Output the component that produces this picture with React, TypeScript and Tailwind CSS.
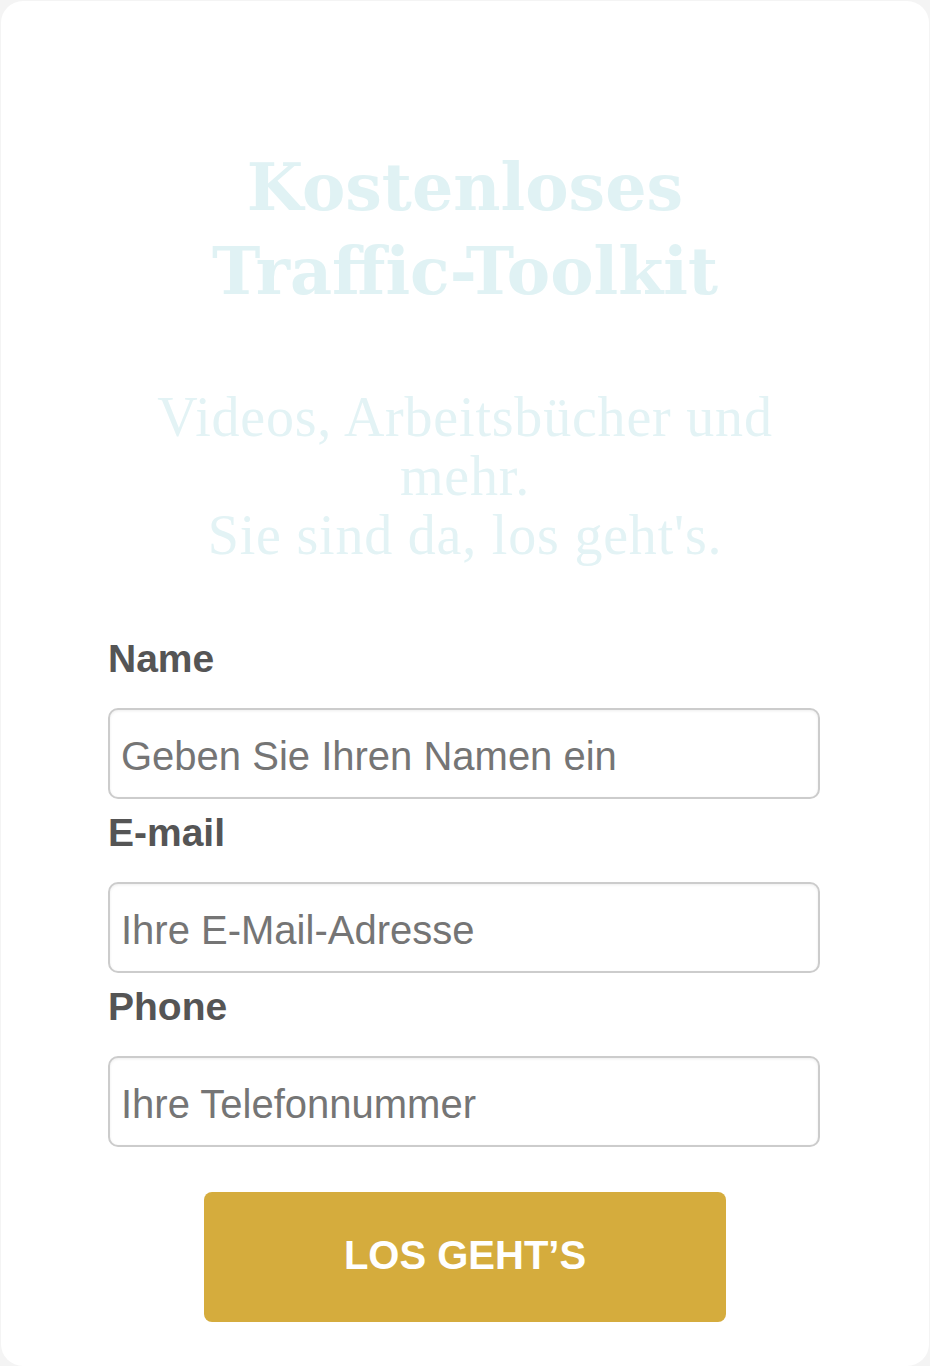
import React from 'react';

const fields = [
  { id: 'name', label: 'Name', placeholder: 'Geben Sie Ihren Namen ein', type: 'text' },
  { id: 'email', label: 'E-mail', placeholder: 'Ihre E-Mail-Adresse', type: 'email' },
  { id: 'phone', label: 'Phone', placeholder: 'Ihre Telefonnummer', type: 'tel' },
];

const App = () => {
  return (
    <div className="min-h-screen bg-[#f4f4f4] pt-px px-px">
      <div className="bg-white rounded-[22px] min-h-[1365px] flex flex-col items-center pt-[144px]">
        {/* Heading */}
        <h1 className="font-['DejaVu_Serif',serif] font-bold text-[65px] leading-[84px] text-[#e0f2f4] text-center">
          Kostenloses
          <br />
          Traffic-Toolkit
        </h1>

        <p className="mt-[75px] font-['Liberation_Serif',serif] text-[56px] leading-[59px] tracking-[0.8px] text-[#e3f3f5] text-center w-[660px]">
          Videos, Arbeitsbücher und mehr.
          <br />
          Sie sind da, los geht's.
        </p>

        {/* Signup form */}
        <form className="mt-[71px] self-stretch pl-[107px] pr-[109px] flex flex-col font-['Liberation_Sans',Arial,sans-serif]">
          {fields.map((f) => (
            <div key={f.id} className="flex flex-col mb-[11px]">
              <label htmlFor={f.id} className="text-[39px] leading-[46px] font-bold text-[#555555] mb-[26px]">
                {f.label}
              </label>
              <input
                id={f.id}
                type={f.type}
                placeholder={f.placeholder}
                className="h-[91px] border-2 border-[#cccccc] rounded-[10px] px-[11px] pt-[6px] text-[40px] text-[#555] placeholder:text-[#757575] outline-none shadow-[inset_0_1px_3px_rgba(0,0,0,0.07)]"
              />
            </div>
          ))}

          <button
            type="button"
            className="self-center ml-[2px] mt-[34px] w-[522px] h-[130px] bg-[#d5ac3d] rounded-[8px] text-white text-[40px] font-bold pb-[4px]"
          >
            LOS GEHT’S
          </button>
        </form>
      </div>
    </div>
  );
};

export default App;
